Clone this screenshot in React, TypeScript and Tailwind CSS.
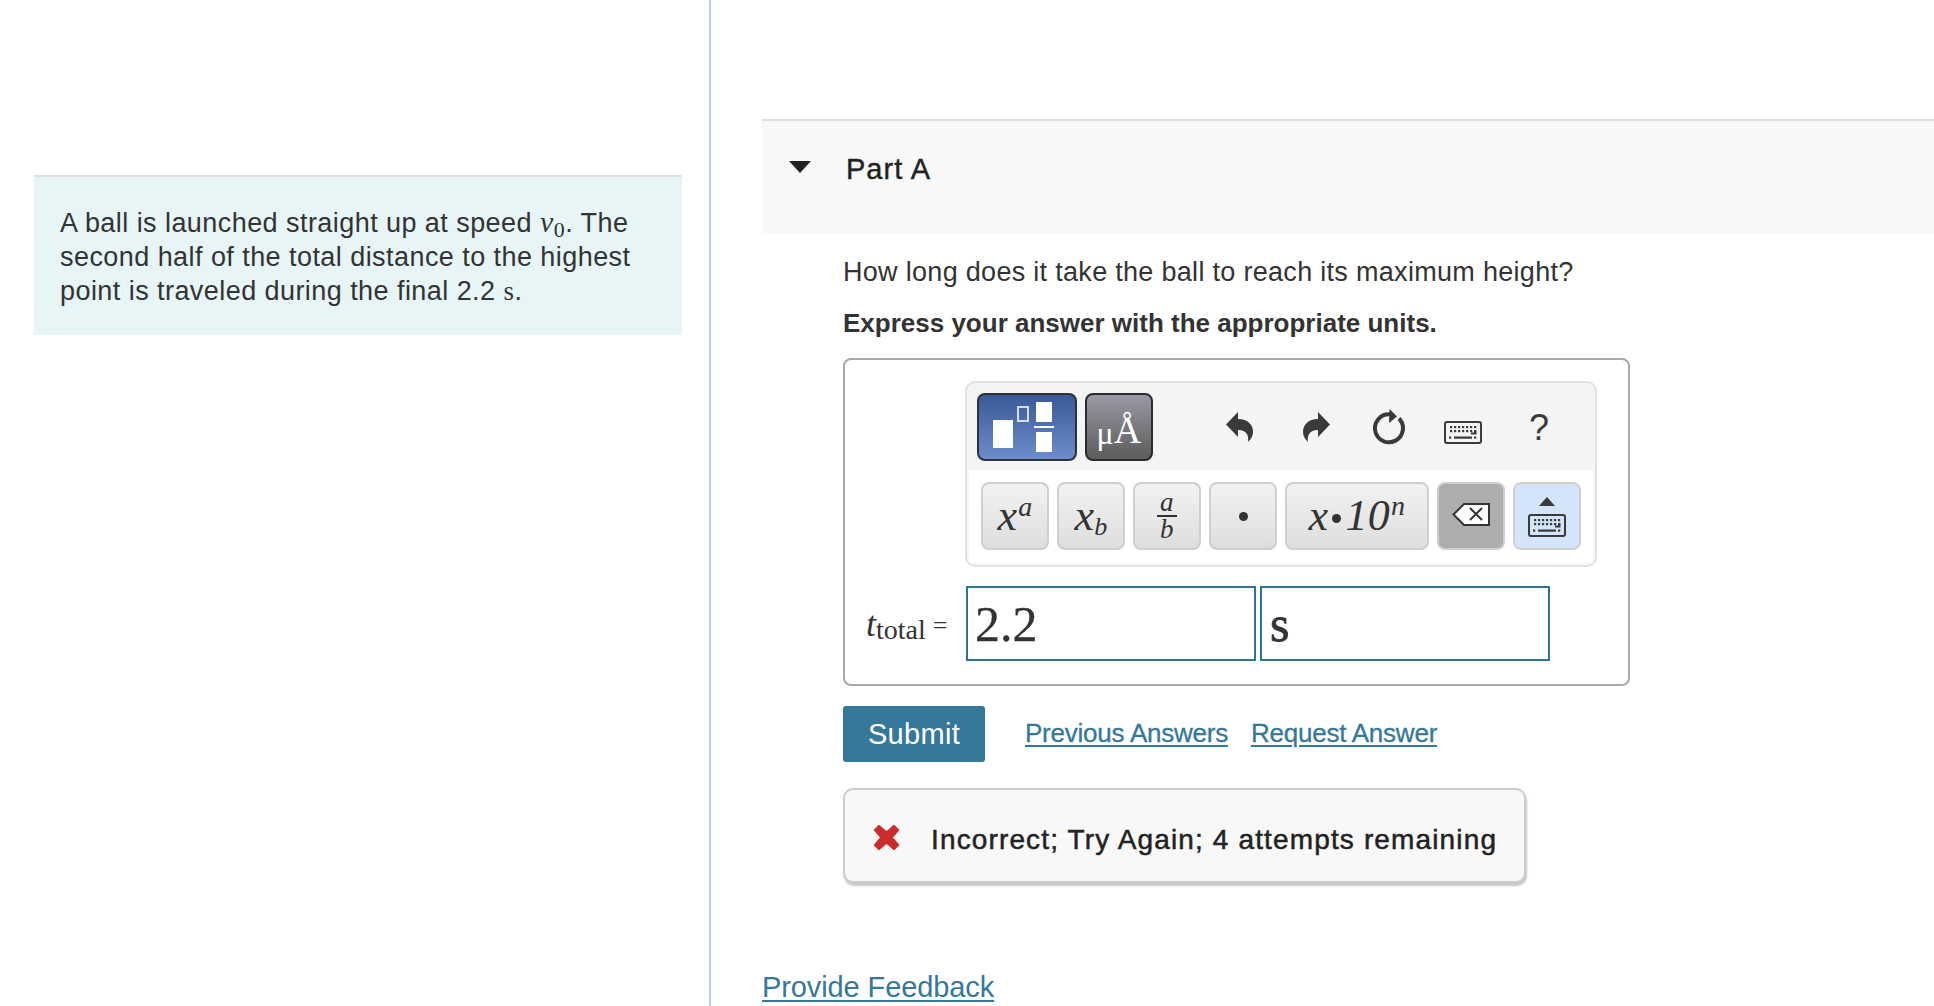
const sans = "font-['Liberation_Sans',Arial,sans-serif]"
const serif = "font-['Liberation_Serif','Times_New_Roman',serif]"

function Undo({ flip }: { flip?: boolean }) {
  return (
    <svg width="27" height="31" viewBox="0 0 27 31" className={flip ? '-scale-x-100' : ''}>
      <path
        d="M0 13.5 L12 1 V8 C22 8 27 14 27 21 C27 25 25 28 22 31 C23 25 21 19 12 19 V26 Z"
        fill="#3a3a3a"
      />
    </svg>
  )
}

function Reset() {
  return (
    <svg width="32" height="36" viewBox="0 0 32 36">
      <path
        d="M17 5.3 A14 14 0 1 0 26 9.5"
        fill="none"
        stroke="#3a3a3a"
        strokeWidth="4"
      />
      <path d="M16.5 0 L24 7.5 L16 14 Z" fill="#3a3a3a" />
    </svg>
  )
}

function Keyboard() {
  const top = [6, 10, 14, 18, 22, 26, 30]
  const mid = [6, 10, 14, 18, 22, 26]
  return (
    <svg width="38" height="23" viewBox="0 0 38 23">
      <rect x="1" y="1" width="36" height="21" rx="2" fill="none" stroke="#3a3a3a" strokeWidth="2" />
      {top.map((x) => (
        <rect key={x} x={x} y="5" width="2.2" height="2.2" fill="#3a3a3a" />
      ))}
      {mid.map((x) => (
        <rect key={x} x={x} y="9" width="2.2" height="2.2" fill="#3a3a3a" />
      ))}
      <path d="M30 9 H32.5 V13.5 H27 V11.5 H30 Z" fill="#3a3a3a" />
      <rect x="5" y="15.5" width="2.2" height="2.2" fill="#3a3a3a" />
      <rect x="10" y="15.5" width="18" height="2.2" fill="#3a3a3a" />
      <rect x="30" y="15.5" width="2.2" height="2.2" fill="#3a3a3a" />
    </svg>
  )
}

function TemplatesIcon() {
  return (
    <svg width="62" height="50" viewBox="0 0 62 50" className="block">
      <rect x="0" y="18" width="20" height="28" fill="#fff" />
      <rect x="25" y="5" width="10" height="14" fill="none" stroke="#d5dcec" strokeWidth="2" />
      <rect x="43" y="0" width="16" height="20" fill="#fff" />
      <rect x="41" y="24" width="20" height="2" fill="#fff" />
      <rect x="43" y="30" width="16" height="20" fill="#fff" />
    </svg>
  )
}

function MathKey({ className, children }: { className?: string; children: React.ReactNode }) {
  return (
    <div
      className={`h-[68px] rounded-[8px] border-2 border-[#cfcfcf] flex items-center justify-center ${className ?? 'w-[68px] bg-gradient-to-b from-[#f2f2f2] to-[#dedede]'}`}
    >
      {children}
    </div>
  )
}

function Toolbar() {
  return (
    <div className="w-[632px] h-[186px] ml-[120px] rounded-[10px] border-2 border-[#e2e2e2] bg-[#f4f4f4] flex flex-col">
      <div className="h-[87px] flex items-start pt-[10px] pl-[10px]">
        <div className="w-[100px] h-[68px] rounded-[8px] border-2 border-[#2f3136] bg-gradient-to-b from-[#3a5999] to-[#6c8ccb] flex items-center pl-[14px]">
          <TemplatesIcon />
        </div>
        <div className={`w-[68px] h-[68px] ml-[8px] rounded-[8px] border-2 border-[#2b2b2b] bg-gradient-to-b from-[#9b99a6] to-[#5c5c5c] flex items-end justify-center pb-[10px] text-white leading-none ${serif}`}>
          <span className="text-[32px]">μ</span>
          <span className="text-[38px]">Å</span>
        </div>
        <div className="ml-[73px] mt-[18px]"><Undo /></div>
        <div className="ml-[50px] mt-[18px]"><Undo flip /></div>
        <div className="ml-[43px] mt-[16px]"><Reset /></div>
        <div className="ml-[39px] mt-[28px]"><Keyboard /></div>
        <div className={`ml-[47px] mt-[15px] text-[36px] leading-[40px] text-[#3a3a3a] ${sans}`}>?</div>
      </div>
      <div className="ml-[2px] mr-[2px] h-[93px] bg-white flex gap-[8px] pt-[12px] pl-[12px]">
        <MathKey>
          <span className={`italic text-[#333] text-[44px] leading-none ${serif}`}>
            x<sup className="text-[28px] relative -top-[14px] align-baseline ml-[1px]">a</sup>
          </span>
        </MathKey>
        <MathKey>
          <span className={`italic text-[#333] text-[44px] leading-none ${serif}`}>
            x<sub className="text-[26px] relative top-[5px] align-baseline">b</sub>
          </span>
        </MathKey>
        <MathKey>
          <span className={`flex flex-col items-center italic text-[#333] text-[27px] leading-[25px] ${serif}`}>
            <span>a</span>
            <span className="w-[20px] h-[2px] bg-[#333]" />
            <span>b</span>
          </span>
        </MathKey>
        <MathKey>
          <span className="w-[9px] h-[9px] rounded-full bg-[#333]" />
        </MathKey>
        <MathKey className="w-[144px] bg-gradient-to-b from-[#f2f2f2] to-[#dedede]">
          <span className={`flex items-center italic text-[#333] text-[44px] leading-none whitespace-nowrap ${serif}`}>
            x
            <span className="w-[9px] h-[9px] rounded-full bg-[#333] mx-[4px] mt-[4px]" />
            <span>10</span>
            <span className="text-[28px] relative -top-[10px] ml-[1px]">n</span>
          </span>
        </MathKey>
        <MathKey className="w-[68px] bg-[#aeaeae]">
          <svg width="38" height="23" viewBox="0 0 38 23" className="-mt-[4px]">
            <path d="M1.5 11.5 L12 1 H37 V22 H12 Z" fill="#fff" stroke="#333" strokeWidth="2" />
            <path d="M18 5 L30 17 M30 5 L18 17" stroke="#333" strokeWidth="2" />
          </svg>
        </MathKey>
        <MathKey className="w-[68px] bg-[#d3e4fb]">
          <div className="flex flex-col items-center gap-[8px] pt-[2px]">
            <svg width="16" height="9" viewBox="0 0 16 9" className="block">
              <path d="M8 0 L16 9 H0 Z" fill="#3a3a3a" />
            </svg>
            <Keyboard />
          </div>
        </MathKey>
      </div>
    </div>
  )
}

export default function App() {
  return (
    <div className={`h-[1006px] overflow-hidden flex bg-white text-[#333] text-[27px] tracking-[0.3px] leading-[34px] ${sans}`}>
      <div className="w-[711px] shrink-0 border-r-2 border-[#bccde2] pt-[175px] pl-[34px]">
        <div className="w-[648px] h-[160px] border-t-2 border-[#e0e0e0] bg-[#e7f5f6] pt-[28px] pl-[26px]">
          <p className="w-[600px] tracking-[0.44px]">
            A ball is launched straight up at speed{' '}
            <span className={`italic text-[30px] ${serif}`}>v</span>
            <sub className={`text-[22px] align-baseline relative top-[5px] ${serif}`}>0</sub>. The second half of the total distance to the highest point is traveled during the final 2.2 <span className={serif}>s</span>.
          </p>
        </div>
      </div>

      <div className="flex-1 pl-[51px] pt-[119px]">
        <div className="h-[115px] border-t-2 border-[#e0e0e0] bg-[#f8f8f8] flex items-start pt-[31px] pl-[27px]">
          <svg width="22" height="12" viewBox="0 0 22 12" className="mt-[9px]">
            <path d="M0 0 H22 L11 12 Z" fill="#222" />
          </svg>
          <h2 className="ml-[35px] text-[29px] tracking-[1px] text-[#222] [-webkit-text-stroke:0.4px_#222]">Part A</h2>
        </div>

        <div className="pl-[81px]">
          <p className="mt-[21px]">How long does it take the ball to reach its maximum height?</p>
          <p className="mt-[17px] font-bold text-[26px] tracking-normal">Express your answer with the appropriate units.</p>

          <div className="mt-[18px] w-[787px] h-[328px] rounded-[8px] border-2 border-[#a8a8a8] pt-[21px]">
            <Toolbar />
            <div className="flex mt-[19px] ml-[21px] tracking-normal">
              <div className={`w-[100px] flex items-center text-[#333] whitespace-nowrap ${serif}`}>
                <span className="italic text-[36px]">t</span>
                <span className="text-[28px] relative top-[6px]">total</span>
                <span className="text-[26px] ml-[7px] relative top-[2px]">=</span>
              </div>
              <div className={`w-[290px] h-[75px] border-2 border-[#2f7396] pl-[7px] flex items-center text-[50px] [-webkit-text-stroke:0.3px_#333] ${serif}`}>2.2</div>
              <div className={`ml-[4px] w-[290px] h-[75px] border-2 border-[#2f7396] pl-[8px] flex items-center text-[50px] [-webkit-text-stroke:0.8px_#333] ${serif}`}>s</div>
            </div>
          </div>

          <div className="mt-[20px] flex items-center text-[26px] tracking-[-0.23px]">
            <button className="w-[142px] h-[56px] rounded-[3px] bg-[#35789a] text-white text-[29px] tracking-[0.3px]">Submit</button>
            <a className="ml-[40px] -mt-[2px] text-[#35789a] underline underline-offset-[3px] [-webkit-text-stroke:0.3px_#35789a]">Previous Answers</a>
            <a className="ml-[23px] -mt-[2px] text-[#35789a] underline underline-offset-[3px] [-webkit-text-stroke:0.3px_#35789a]">Request Answer</a>
          </div>

          <div className="mt-[26px] w-[683px] h-[95px] rounded-[10px] border-2 border-[#cccccc] bg-[#f8f8f8] shadow-[1px_3px_2px_#c8c8c8] flex items-center pl-[28px]">
            <svg width="27" height="27" viewBox="0 0 27 27" className="mt-[3px]">
              <path
                d="M6 1.5 L13.5 8 L21 1.5 L25.5 6 L19 13.5 L25.5 21 L21 25.5 L13.5 19 L6 25.5 L1.5 21 L8 13.5 L1.5 6 Z"
                fill="#cc2b2b"
                stroke="#cc2b2b"
                strokeWidth="1.5"
                strokeLinejoin="round"
              />
            </svg>
            <span className="ml-[31px] mt-[8px] text-[28px] tracking-[1.14px] text-[#222] [-webkit-text-stroke:0.5px_#222] whitespace-nowrap">
              Incorrect; Try Again; 4 attempts remaining
            </span>
          </div>
        </div>

        <a className="block mt-[87px] text-[#35789a] text-[29px] tracking-[-0.1px] underline underline-offset-[3px]">Provide Feedback</a>
      </div>
    </div>
  )
}
